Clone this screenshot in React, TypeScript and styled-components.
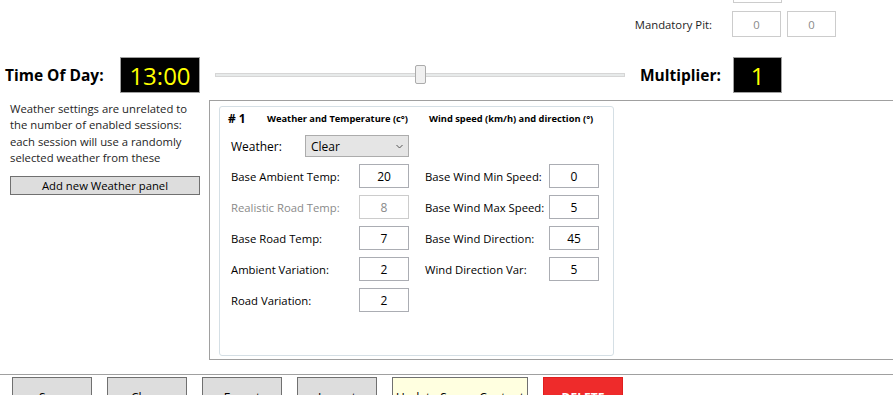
import styled, { createGlobalStyle } from "styled-components";

const GlobalStyle = createGlobalStyle`
  html, body {
    margin: 0;
    padding: 0;
    background: #ffffff;
    overflow: hidden;
  }
  body {
    font-family: "Open Sans", "Noto Sans", sans-serif;
    font-size: 11.3px;
    color: #000000;
  }
`;

const Page = styled.div`
  width: 893px;
  height: 395px;
  overflow: hidden;
  display: flex;
  flex-direction: column;
  & > * {
    flex-shrink: 0;
  }
`;

const TopStub = styled.div`
  height: 3px;
  overflow: hidden;
  display: flex;
  align-items: flex-end;
  padding-left: 733px;
`;

const PitRow = styled.div`
  margin-top: 8px;
  height: 26px;
  display: flex;
  align-items: center;
  justify-content: flex-end;
  padding-right: 57px;
`;

const PitLabel = styled.span`
  margin-right: 20px;
  color: #1e1e1e;
`;

const SmallBox = styled.div<{ $muted?: boolean }>`
  width: 47px;
  height: 24px;
  border: 1px solid ${(p) => (p.$muted ? "#cccccc" : "#abadb3")};
  color: ${(p) => (p.$muted ? "#8a8a8a" : "#000000")};
  display: flex;
  align-items: center;
  justify-content: center;
  flex-shrink: 0;
  & + & {
    margin-left: 6px;
  }
`;

const TimeRow = styled.div`
  margin-top: 20px;
  height: 36px;
  display: flex;
  align-items: center;
`;

const BigLabel = styled.span<{ $width: number }>`
  width: ${(p) => p.$width}px;
  font-size: 15.5px;
  font-weight: 700;
  flex-shrink: 0;
`;

const Display = styled.div<{ $width: number }>`
  width: ${(p) => p.$width}px;
  height: 34px;
  box-sizing: content-box;
  background: #000000;
  border: 1px solid #a0a0a0;
  color: #ffff00;
  font-size: 24px;
  display: flex;
  align-items: center;
  justify-content: center;
  flex-shrink: 0;
`;

const SliderWrap = styled.div`
  width: 410px;
  margin: 0 15px;
  height: 18px;
  display: flex;
  align-items: center;
  flex-shrink: 0;
`;

const Track = styled.div`
  position: relative;
  width: 100%;
  height: 2px;
  background: #e7eaea;
  border: 1px solid #d6d6d6;
`;

const Thumb = styled.div`
  position: absolute;
  top: -9px;
  width: 9px;
  height: 17px;
  background: #f0f0f0;
  border: 1px solid #acacac;
  border-radius: 2px;
`;

const Content = styled.div`
  margin-top: 7px;
  height: 260px;
  display: flex;
`;

const Sidebar = styled.div`
  width: 190px;
  padding: 1px 9px 0 10px;
  flex-shrink: 0;
`;

const Note = styled.p`
  margin: 0;
  line-height: 16.3px;
  color: #1e1e1e;
`;

const GreyButton = styled.button`
  margin-top: 10px;
  width: 190px;
  height: 19px;
  padding: 0;
  background: #dddddd;
  border: 1px solid #707070;
  font-family: inherit;
  font-size: 11.3px;
  color: #000000;
`;

const Panel = styled.div`
  flex: 1;
  border-top: 1px solid #a0a0a0;
  border-left: 1px solid #a0a0a0;
  border-bottom: 1px solid #a0a0a0;
  padding: 5px 0 0 9px;
`;

const Card = styled.div`
  box-sizing: border-box;
  width: 395px;
  height: 250px;
  border: 1px solid #d5dfe5;
  border-radius: 3px;
  padding: 0 0 0 11px;
  display: flex;
  flex-direction: column;
`;

const CardHeader = styled.div`
  height: 22px;
  display: flex;
  align-items: center;
  margin-left: -3px;
`;

const Number = styled.span`
  width: 39px;
  font-weight: 700;
  font-size: 12px;
`;

const Heading = styled.span<{ $width: number }>`
  width: ${(p) => p.$width}px;
  font-weight: 700;
  font-size: 9.3px;
`;

const WeatherRow = styled.div`
  margin-top: 6px;
  height: 22px;
  display: flex;
  align-items: center;
`;

const Select = styled.div`
  width: 92px;
  height: 20px;
  margin-left: 20px;
  padding: 0 5px;
  background: #e5e5e5;
  border: 1px solid #acacac;
  display: flex;
  align-items: center;
  justify-content: space-between;
  font-size: 12px;
`;

const FieldGrid = styled.div`
  margin-top: 7px;
  display: grid;
  grid-template-columns: 128px 50px 16px 124px 50px;
  row-gap: 7px;
  grid-auto-rows: 24px;
`;

const FieldLabel = styled.span<{ $muted?: boolean; $right?: boolean }>`
  display: flex;
  align-items: center;
  white-space: nowrap;
  color: ${(p) => (p.$muted ? "#8a8a8a" : "#000000")};
  grid-column: ${(p) => (p.$right ? 4 : 1)};
`;

const Field = styled.div<{ $muted?: boolean; $right?: boolean }>`
  box-sizing: border-box;
  height: 24px;
  border: 1px solid ${(p) => (p.$muted ? "#cccccc" : "#abadb3")};
  color: ${(p) => (p.$muted ? "#8a8a8a" : "#000000")};
  display: flex;
  align-items: center;
  justify-content: center;
  font-size: 12px;
  grid-column: ${(p) => (p.$right ? 5 : 2)};
`;

const Separator = styled.div`
  margin-top: 14px;
  height: 1px;
  background: #a0a0a0;
`;

const ButtonBar = styled.div`
  padding: 2px 0 0 12px;
  display: flex;
  gap: 15px;
`;

const ActionButton = styled.button<{ $variant?: "note" | "danger"; $width?: number }>`
  width: ${(p) => p.$width ?? 80}px;
  height: 41px;
  padding: 0;
  font-family: inherit;
  font-size: 12px;
  background: ${(p) =>
    p.$variant === "note" ? "#ffffe0" : p.$variant === "danger" ? "#ee2b2b" : "#dddddd"};
  border: 1px solid ${(p) => (p.$variant === "danger" ? "#e01e1e" : "#707070")};
  color: ${(p) => (p.$variant === "danger" ? "#ffffff" : "#000000")};
  font-weight: ${(p) => (p.$variant === "danger" ? 700 : 400)};
  flex-shrink: 0;
`;

type Row = { l: string; v: string; rl?: string; rv?: string; muted?: boolean };

const rows: Row[] = [
  { l: "Base Ambient Temp:", v: "20", rl: "Base Wind Min Speed:", rv: "0" },
  { l: "Realistic Road Temp:", v: "8", rl: "Base Wind Max Speed:", rv: "5", muted: true },
  { l: "Base Road Temp:", v: "7", rl: "Base Wind Direction:", rv: "45" },
  { l: "Ambient Variation:", v: "2", rl: "Wind Direction Var:", rv: "5" },
  { l: "Road Variation:", v: "2" },
];

const timeValue = 13 / 26;

export default function App() {
  return (
    <Page>
      <GlobalStyle />
      <TopStub>
        <SmallBox $muted />
      </TopStub>
      <PitRow>
        <PitLabel>Mandatory Pit:</PitLabel>
        <SmallBox $muted>0</SmallBox>
        <SmallBox $muted>0</SmallBox>
      </PitRow>
      <TimeRow>
        <BigLabel $width={115} style={{ marginLeft: 5 }}>
          Time Of Day:
        </BigLabel>
        <Display $width={78}>13:00</Display>
        <SliderWrap>
          <Track>
            <Thumb style={{ left: `calc(${timeValue * 100}% - 5px)` }} />
          </Track>
        </SliderWrap>
        <BigLabel $width={93}>Multiplier:</BigLabel>
        <Display $width={47}>1</Display>
      </TimeRow>
      <Content>
        <Sidebar>
          <Note>
            Weather settings are unrelated to the number of enabled sessions: each
            session will use a randomly selected weather from these
          </Note>
          <GreyButton>Add new Weather panel</GreyButton>
        </Sidebar>
        <Panel>
          <Card>
            <CardHeader>
              <Number># 1</Number>
              <Heading $width={162}>Weather and Temperature (c°)</Heading>
              <Heading $width={180}>Wind speed (km/h) and direction (°)</Heading>
            </CardHeader>
            <WeatherRow>
              <span style={{ width: 54, fontSize: 12 }}>Weather:</span>
              <Select>
                <span>Clear</span>
                <svg width="7" height="5" viewBox="0 0 7 5">
                  <path d="M0.5 1 L3.5 4 L6.5 1" fill="none" stroke="#555" strokeWidth="1" />
                </svg>
              </Select>
            </WeatherRow>
            <FieldGrid>
              {rows.flatMap((r) => [
                <FieldLabel key={r.l} $muted={r.muted}>
                  {r.l}
                </FieldLabel>,
                <Field key={r.l + "v"} $muted={r.muted}>
                  {r.v}
                </Field>,
                ...(r.rl
                  ? [
                      <FieldLabel key={r.rl} $right>
                        {r.rl}
                      </FieldLabel>,
                      <Field key={r.rl + "v"} $right>
                        {r.rv}
                      </Field>,
                    ]
                  : []),
              ])}
            </FieldGrid>
          </Card>
        </Panel>
      </Content>
      <Separator />
      <ButtonBar>
        <ActionButton>Save</ActionButton>
        <ActionButton>Clone</ActionButton>
        <ActionButton>Export</ActionButton>
        <ActionButton>Import</ActionButton>
        <ActionButton $variant="note" $width={136}>
          Update Server Content
        </ActionButton>
        <ActionButton $variant="danger">DELETE</ActionButton>
      </ButtonBar>
    </Page>
  );
}
